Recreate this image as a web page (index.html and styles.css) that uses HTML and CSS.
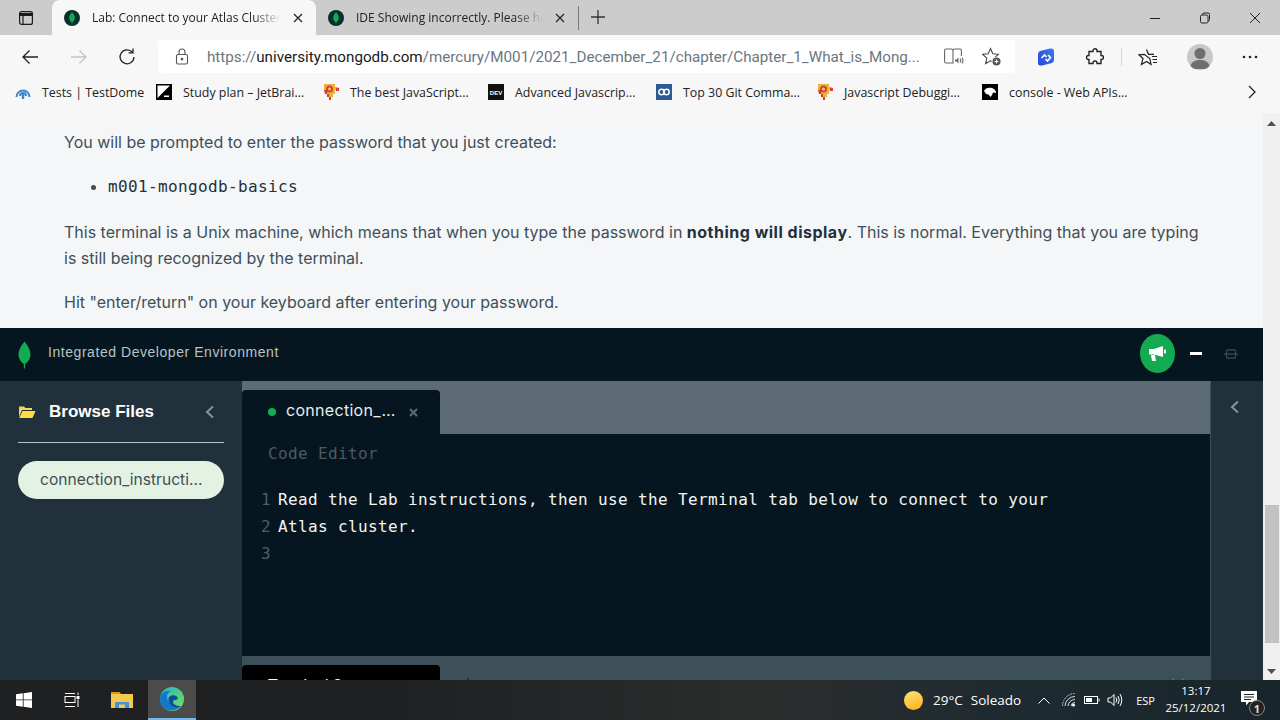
FILE: index.html
```html
<!DOCTYPE html>
<html lang="en">
<head>
<meta charset="utf-8">
<title>Lab: Connect to your Atlas Cluster</title>
<link rel="stylesheet" href="styles.css">
</head>
<body>
<svg class="defs" width="0" height="0" aria-hidden="true">
  <defs>
    <symbol id="fav-mongo" viewBox="0 0 16 16"><circle cx="8" cy="8" r="8" fill="#06302e"/><path d="M8 2.2C9.8 4.3 11 6.200 10.800 8.300 10.600 10.400 9.300 11.600 8.400 12.200L8.200 14H7.800L7.600 12.200C6.700 11.600 5.400 10.400 5.200 8.300 5 6.200 6.200 4.300 8 2.200Z" fill="#13aa52"/></symbol>
    <symbol id="fav-fire" viewBox="0 0 16 16"><path d="M1 0H12V3H15V6H12V10H10V13H8V16H6V13H4V10H2V6H1Z" fill="#e8b53a"/><path d="M1 6H4V10H6V13H8V16H6V13H4V10H2Z" fill="#d83a2b"/><circle cx="6.500" cy="5" r="3.500" fill="#d8402f"/><circle cx="6.500" cy="5" r="1.500" fill="#f6d66a"/><rect x="13" y="4" width="3" height="3" fill="#e2402e"/></symbol>
    <linearGradient id="ext-grad" x1="0" y1="1" x2="1" y2="0"><stop offset="0" stop-color="#2a45e0"/><stop offset="1" stop-color="#3a7bf0"/></linearGradient>
  </defs>
</svg>

<div class="tabstrip">
  <div class="tab-toggle">
    <svg width="16" height="16" viewBox="0 0 16 16" fill="none" stroke="#1a1a1a" stroke-width="1.200"><rect x="1.600" y="1.600" width="12.800" height="12.800" rx="2"/><path d="M1.600 4.500H14.400" stroke-width="3"/><path d="M5 5V14"/></svg>
  </div>
  <div class="tab tab-active">
    <svg class="tab-fav" width="16" height="16"><use href="#fav-mongo"/></svg>
    <span class="tab-title">Lab: Connect to your Atlas Cluster</span>
    <svg class="tab-close" width="10" height="10" viewBox="0 0 10 10" stroke="#222" stroke-width="1.200"><path d="M1 1L9 9M9 1L1 9"/></svg>
  </div>
  <div class="tab">
    <svg class="tab-fav" width="16" height="16"><use href="#fav-mongo"/></svg>
    <span class="tab-title">IDE Showing incorrectly. Please help</span>
    <svg class="tab-close" width="10" height="10" viewBox="0 0 10 10" stroke="#222" stroke-width="1.200"><path d="M1 1L9 9M9 1L1 9"/></svg>
  </div>
  <div class="tab-sep"></div>
  <svg class="tab-new" width="16" height="16" viewBox="0 0 16 16" stroke="#333" stroke-width="1.300"><path d="M8 1V15M1 8H15"/></svg>
  <div class="winctl">
    <svg width="12" height="12" viewBox="0 0 12 12" stroke="#222"><path d="M1 6.500H11"/></svg>
    <svg width="12" height="12" viewBox="0 0 12 12" stroke="#222" fill="none"><rect x="1.500" y="3" width="7.500" height="8" rx="1.500"/><path d="M3.500 3V2.500A1.500 1.500 0 0 1 5 1H9A1.500 1.500 0 0 1 10.500 2.500V7.500A1.500 1.500 0 0 1 9 9"/></svg>
    <svg width="12" height="12" viewBox="0 0 12 12" stroke="#222"><path d="M1 1L11 11M11 1L1 11"/></svg>
  </div>
</div>

<div class="toolbar">
  <svg class="tb-back" width="18" height="16" viewBox="0 0 18 16" fill="none" stroke="#222" stroke-width="1.300"><path d="M17 8H2M8.500 1.500L2 8L8.500 14.500"/></svg>
  <svg class="tb-forward" width="18" height="16" viewBox="0 0 18 16" fill="none" stroke="#c4c4c4" stroke-width="1.300"><path d="M1 8H16M9.500 1.500L16 8L9.500 14.500"/></svg>
  <svg class="tb-reload" width="18" height="18" viewBox="0 0 18 18" fill="none" stroke="#222" stroke-width="1.300"><path d="M14.500 4.500A7 7 0 1 0 16 9"/><path d="M10.500 4.800H15V0.500"/></svg>
  <div class="addressbar">
    <svg class="lock" width="14" height="17" viewBox="0 0 14 17" fill="none" stroke="#555" stroke-width="1.100"><rect x="1.500" y="6.500" width="11" height="9.500" rx="1.500"/><path d="M4 6.500V4A3 3 0 0 1 10 4V6.500"/><circle cx="7" cy="11.200" r=".8" fill="#555"/></svg>
    <span class="url"><span class="url-dim">https://</span><span class="url-host">university.mongodb.com</span><span class="url-dim">/mercury/M001/2021_December_21/chapter/Chapter_1_What_is_Mong...</span></span>
    <svg class="read" width="20" height="17" viewBox="0 0 20 17" fill="none" stroke="#666" stroke-width="1.100"><path d="M9 2.500Q9 1 7.500 1H2Q0.600 1 0.600 2.500V13.500Q0.600 15 2 15H9ZM9 2.500Q9 1 10.500 1H16Q17.400 1 17.400 2.500V8"/><path d="M11 11.500H12.500L14.500 9.500V15.500L12.500 13.500H11Z" fill="#666" stroke="none"/><path d="M16 10.500Q17.500 12.500 16 14.500M18 9.500Q20 12.500 18 15.500"/></svg>
    <svg class="fav-add" width="20" height="20" viewBox="0 0 20 20" fill="none" stroke="#444" stroke-width="1.100"><path d="M8.500 1.500L10.800 6.700L16.300 7.300L12.200 11.100L13.400 16.600L8.500 13.800L3.600 16.600L4.800 11.100L0.700 7.300L6.200 6.700Z"/><circle cx="14.500" cy="14.500" r="4.800" fill="#fff" stroke="none"/><circle cx="14.500" cy="14.500" r="4" fill="#555" stroke="none"/><path d="M14.500 12.500V16.500M12.500 14.500H16.500" stroke="#fff"/></svg>
  </div>
  <svg class="ext-blue" width="18" height="18" viewBox="0 0 18 18"><path d="M1 6Q1 4 3 3L13 0.500Q17 0 17 3V12Q17 14 15 15L5 17.500Q1 18 1 15Z" fill="url(#ext-grad)"/><path d="M4.500 10L7.500 7L9.500 9M8.500 11L10.500 13L13.500 9.500L11 7" fill="none" stroke="#fff" stroke-width="1.600"/></svg>
  <svg class="ext-puzzle" width="18" height="18" viewBox="0 0 18 18" fill="none" stroke="#222" stroke-width="1.400"><path d="M7 3.500V2.800A2 2 0 0 1 11 2.800V3.500H15V7.500H15.500A2 2 0 0 1 15.500 11.500H15V15.500H11V15A2 2 0 0 0 7 15V15.500H3V11.500H2.500A2 2 0 0 1 2.500 7.500H3V3.500Z"/></svg>
  <div class="tb-sep"></div>
  <svg class="tb-favs" width="20" height="18" viewBox="0 0 20 18" fill="none" stroke="#222" stroke-width="1.200"><path d="M8.500 1.500L10.500 6.300H16M11.800 10.500L13 16.500L8.500 13.500L3.500 16.500L5 10.500L1 6.800L6.300 6.300Z"/><path d="M14 8.500H19M14.500 11.500H19M15 14.500H19"/></svg>
  <div class="avatar"><svg width="26" height="26" viewBox="0 0 26 26"><circle cx="13" cy="9.500" r="5.500" fill="#6e6e6e"/><path d="M3 25C3 18 8 16 13 16S23 18 23 25Z" fill="#6e6e6e"/></svg></div>
  <svg class="tb-more" width="16" height="4" viewBox="0 0 16 4" fill="#222"><circle cx="2" cy="2" r="1.300"/><circle cx="8" cy="2" r="1.300"/><circle cx="14" cy="2" r="1.300"/></svg>
</div>

<div class="bookmarks">
  <div class="bm bm-a">
    <svg width="16" height="16" viewBox="0 0 16 16" fill="none" stroke="#3e88c8" stroke-width="2"><path d="M1.500 13A6.500 6.500 0 0 1 14.500 13"/><path d="M5 12A3 3 0 0 1 11 12"/><path d="M8 9V15" stroke-width="2.500"/></svg>
    <span class="bm-text">Tests | TestDome</span>
  </div>
  <div class="bm bm-b">
    <svg width="16" height="16" viewBox="0 0 16 16"><rect width="16" height="16" fill="#000"/><path d="M1.500 1.500H14L1.500 14Z" fill="#fff"/><rect x="8" y="11.500" width="5" height="1.500" fill="#fff"/></svg>
    <span class="bm-text">Study plan – JetBrai...</span>
  </div>
  <div class="bm bm-c">
    <svg width="16" height="16"><use href="#fav-fire"/></svg>
    <span class="bm-text">The best JavaScript...</span>
  </div>
  <div class="bm bm-d">
    <svg width="16" height="16" viewBox="0 0 16 16"><rect width="16" height="16" fill="#111"/><text x="8" y="10.500" class="dev-text" text-anchor="middle">DEV</text></svg>
    <span class="bm-text">Advanced Javascrip...</span>
  </div>
  <div class="bm bm-e">
    <svg width="16" height="16" viewBox="0 0 16 16" fill="none"><rect width="16" height="16" fill="#2d5a94"/><circle cx="5.500" cy="8" r="2.700" stroke="#fff" stroke-width="1.500"/><circle cx="10.500" cy="8" r="2.700" stroke="#fff" stroke-width="1.500"/></svg>
    <span class="bm-text">Top 30 Git Comma...</span>
  </div>
  <div class="bm bm-f">
    <svg width="16" height="16"><use href="#fav-fire"/></svg>
    <span class="bm-text">Javascript Debuggi...</span>
  </div>
  <div class="bm bm-g">
    <svg width="16" height="16" viewBox="0 0 16 16"><rect width="16" height="16" fill="#000"/><path d="M2 7C3 4 7 3 10 4C13 5 14 7 14 9L11 8.500L10 11L8.500 13L6.500 10.500L4 10Z" fill="#fff"/></svg>
    <span class="bm-text">console - Web APIs...</span>
  </div>
  <svg class="bm-more" width="8" height="14" viewBox="0 0 8 14" fill="none" stroke="#222" stroke-width="1.300"><path d="M1 1L7 7L1 13"/></svg>
</div>

<div class="viewport">
  <main class="page">
    <article class="article">
      <p>You will be prompted to enter the password that you just created:</p>
      <ul><li><code>m001-mongodb-basics</code></li></ul>
      <p>This terminal is a Unix machine, which means that when you type the password in <strong>nothing will display</strong>. This is normal. Everything that you are typing is still being recognized by the terminal.</p>
      <p>Hit "enter/return" on your keyboard after entering your password.</p>
    </article>
    <section class="ide">
      <header class="ide-head">
        <svg class="ide-leaf" width="13" height="28" viewBox="0 0 13 28"><path d="M6.500 0.500C9.500 4.500 12.500 8.500 12.500 13.500C12.500 18 9.500 21.500 7.200 23L7 27.500H6L5.800 23C3.500 21.500 0.500 18 0.500 13.500C0.500 8.500 3.500 4.500 6.500 0.500Z" fill="#13aa52"/></svg>
        <span class="ide-title">Integrated Developer Environment</span>
        <div class="ide-announce">
          <svg width="20" height="18" viewBox="0 0 20 18" fill="#fff"><path d="M1 4H6L15 1V12L6 9.500H1Z"/><path d="M3 10H7L8 16H4Z"/><rect x="16" y="4.500" width="2" height="4" rx="1"/></svg>
        </div>
        <div class="ide-min"></div>
        <svg class="ide-pop" width="14" height="10" viewBox="0 0 14 10" fill="none" stroke="#3d4f58" stroke-width="1.200"><rect x="2.500" y="0.800" width="9" height="8.400" rx="1"/><path d="M0 5H14"/></svg>
      </header>
      <div class="ide-body">
        <aside class="files">
          <div class="files-head">
            <svg width="18" height="14" viewBox="0 0 18 14"><path d="M1 1.500H6L7.500 3H14V5H4L1 12Z" fill="#f4d35e"/><path d="M4.500 6H17.500L14.500 13H1.200Z" fill="#ffdd49"/></svg>
            <span class="files-title">Browse Files</span>
            <svg class="files-back" width="9" height="14" viewBox="0 0 9 14" fill="none" stroke="#889397" stroke-width="2"><path d="M8 1.500L2 7L8 12.500"/></svg>
          </div>
          <div class="file-pill"><span class="file-name">connection_instructions.txt</span></div>
        </aside>
        <div class="editor-col">
          <div class="editor-tabs">
            <div class="editor-tab">
              <span class="dot"></span>
              <span class="editor-tab-name">connection_instructions</span>
              <svg width="9" height="9" viewBox="0 0 9 9" stroke="#5d6c74" stroke-width="2"><path d="M1 1L8 8M8 1L1 8"/></svg>
            </div>
          </div>
          <div class="editor">
            <div class="editor-label">Code Editor</div>
            <div class="code">
              <div class="line"><span class="ln">1</span><span>Read the Lab instructions, then use the Terminal tab below to connect to your</span></div>
              <div class="line"><span class="ln">2</span><span>Atlas cluster.</span></div>
              <div class="line"><span class="ln">3</span><span></span></div>
            </div>
          </div>
          <div class="term-bar">
            <div class="term-tab">Terminal 2</div>
            <svg class="term-add" width="10" height="10" viewBox="0 0 10 10" stroke="#21313c" stroke-width="2"><path d="M5 0V10M0 5H10"/></svg>
            <svg class="term-ctl" width="14" height="4" viewBox="0 0 14 4" fill="#5d6c74"><circle cx="2" cy="2" r="1.500"/><circle cx="12" cy="2" r="1.500"/></svg>
          </div>
        </div>
        <aside class="side-right">
          <svg width="9" height="14" viewBox="0 0 9 14" fill="none" stroke="#889397" stroke-width="2"><path d="M8 1.500L2 7L8 12.500"/></svg>
        </aside>
      </div>
    </section>
  </main>
  <div class="scrollbar">
    <svg class="sb-up" width="9" height="5" viewBox="0 0 9 5" fill="#505050"><path d="M4.500 0L9 5H0Z"/></svg>
    <div class="sb-thumb"></div>
    <svg class="sb-down" width="9" height="5" viewBox="0 0 9 5" fill="#505050"><path d="M4.500 5L9 0H0Z"/></svg>
  </div>
</div>

<footer class="taskbar">
  <div class="tk-cell tk-start"><svg width="16" height="16" viewBox="0 0 16 16" fill="#fff"><path d="M0 2.300L6.800 1.300V7.500H0ZM7.600 1.200L16 0V7.500H7.600ZM0 8.300H6.800V14.700L0 13.700ZM7.600 8.300H16V16L7.600 14.800Z"/></svg></div>
  <div class="tk-cell"><svg width="16" height="16" viewBox="0 0 16 16" fill="none" stroke="#fff"><rect x="1" y="4.500" width="10" height="6"/><path d="M1 1.500H11M1 14.500H11M14 0.500V3M14 7.500V15"/><rect x="12.500" y="4" width="3" height="3" fill="#fff" stroke="none"/></svg></div>
  <div class="tk-cell tk-files"><svg width="22" height="18" viewBox="0 0 22 18"><path d="M0 1H8L10 3H22V17H0Z" fill="#f4c84f"/><path d="M0 1H8L9 3H0Z" fill="#d99a1f"/><path d="M4 17V11H18V17H14V13.500H8V17Z" fill="#3e95d8"/></svg></div>
  <div class="tk-cell tk-active"><svg width="24" height="24" viewBox="0 0 24 24"><defs><linearGradient id="edge" x1="0" y1="0" x2="1" y2="1"><stop offset="0" stop-color="#1fb6d8"/><stop offset=".6" stop-color="#58d07a"/><stop offset="1" stop-color="#7de06b"/></linearGradient></defs><circle cx="12" cy="12" r="12" fill="url(#edge)"/><path d="M0 12C0 6 6 3 11 4C6 6 6 11 9 15C12 19 18 20 21 19C17 24 9 25 4 21C1.500 18.500 0 15.500 0 12Z" fill="#1677c8"/><path d="M9 15C7 10 11 7.500 15 8.500C18 9.500 19 12 16 13C13 13 12 15 14 17C16 19 19 19 21 19C17 22 11 20 9 15Z" fill="#0f4f99"/></svg></div>
  <div class="tray">
    <span class="sun"></span>
    <span class="tray-temp">29°C</span>
    <span class="tray-weather">Soleado</span>
    <svg class="tray-up" width="12" height="7" viewBox="0 0 12 7" fill="none" stroke="#fff"><path d="M0.500 6.500L6 1L11.500 6.500"/></svg>
    <svg class="tray-wifi" width="14" height="14" viewBox="0 0 14 14" fill="none" stroke="#ddd"><path d="M0.500 13A12.500 12.500 0 0 1 13 0.500" stroke-dasharray="1.500 1"/><path d="M3 13A10 10 0 0 1 13 3.500"/><path d="M6 13A7 7 0 0 1 13 6.500"/><path d="M9 13A4 4 0 0 1 13 9.500"/><circle cx="11.500" cy="12" r="1.500" fill="#fff" stroke="none"/></svg>
    <svg class="tray-batt" width="16" height="10" viewBox="0 0 16 10" fill="none" stroke="#fff"><rect x="0.500" y="1.500" width="13" height="7"/><rect x="2" y="3" width="6" height="4" fill="#fff" stroke="none"/><path d="M15 3.500V6.500"/></svg>
    <svg class="tray-vol" width="16" height="14" viewBox="0 0 16 14" fill="none" stroke="#fff"><path d="M1 5H3.500L7 1.500V12.500L3.500 9H1Z"/><path d="M9 4.500Q10.500 7 9 9.500M11 3Q13.500 7 11 11M13 1Q16.500 7 13 13"/></svg>
    <span class="tray-lang">ESP</span>
    <div class="tray-clock"><span>13:17</span><span>25/12/2021</span></div>
    <div class="tray-note">
      <svg width="16" height="15" viewBox="0 0 16 15" fill="#fff"><path d="M0 0H16V11H8L5 14.500V11H0Z"/><path d="M3 3.500H13M3 6H13M3 8.500H10" stroke="#222" stroke-width="1"/></svg>
      <span class="note-badge">1</span>
    </div>
  </div>
</footer>
</body>
</html>
```
FILE: styles.css
```css
* { box-sizing: border-box; }
html, body { margin: 0; height: 720px; overflow: hidden; }
body {
  display: flex;
  flex-direction: column;
  width: 1280px;
  font-family: "Open Sans", "Liberation Sans", sans-serif;
  background: #f7f7f7;
  color: #222;
}
.defs { position: absolute; }
svg { display: block; flex: none; }

/* Browser tab strip */
.tabstrip { height: 35px; flex: none; display: flex; align-items: flex-end; background: #ccc; }
.tab-toggle { width: 52px; height: 35px; display: flex; align-items: center; justify-content: center; }
.tab { width: 264px; height: 35px; display: flex; align-items: center; padding: 0 13px 0 12px; gap: 12px; }
.tab-active { background: #f7f7f7; border-radius: 8px 8px 0 0; }
.tab + .tab { width: 262px; }
.tab-title {
  flex: 1; font-size: 12px; white-space: nowrap; overflow: hidden; color: #222;
  -webkit-mask-image: linear-gradient(90deg, #000 85%, transparent 100%);
  mask-image: linear-gradient(90deg, #000 85%, transparent 100%);
}
.tab-sep { width: 1px; height: 24px; margin-bottom: 5px; background: #777; }
.tab-new { margin: 0 0 10px 11px; }
.winctl { margin-left: auto; height: 35px; display: flex; align-items: center; gap: 38px; padding-right: 19px; }

/* Browser toolbar */
.toolbar { height: 43px; flex: none; display: flex; align-items: center; background: #f7f7f7; }
.tb-back { margin-left: 21px; }
.tb-forward { margin-left: 31px; }
.tb-reload { margin-left: 30px; }
.addressbar {
  width: 857px; height: 33px; margin-left: 22px; padding: 0 13px 0 17px;
  display: flex; align-items: center; background: #fff; border-radius: 4px;
}
.url { flex: 1; min-width: 0; margin-left: 18px; font-family: Roboto, sans-serif; font-size: 15.200px; white-space: nowrap; }
.url-dim { color: #6b7680; }
.url-host { color: #1a1a1a; }
.read { margin: 0 18px 0 0; }
.ext-blue { margin-left: 22px; }
.ext-puzzle { margin-left: 31px; }
.tb-sep { width: 1px; height: 18px; margin-left: 17px; background: #d5d5d5; }
.tb-favs { margin-left: 16px; }
.avatar {
  width: 26px; height: 26px; margin-left: 29px; border-radius: 50%;
  background: #c8c8c6; overflow: hidden;
}
.tb-more { margin-left: 29px; }

/* Bookmarks */
.bookmarks { height: 35px; flex: none; display: flex; align-items: center; padding: 0 0 7px 15px; background: #f7f7f7; }
.bm { display: flex; align-items: center; gap: 11px; font-size: 12.400px; white-space: nowrap; flex: none; color: #222; }
.bm-a { width: 141px; }
.bm-b { width: 167px; }
.bm-c { width: 165px; }
.bm-d { width: 168px; }
.bm-e { width: 161px; }
.bm-f { width: 165px; }
.bm-g { width: 266px; }
.dev-text { font: 700 6px "Liberation Sans", sans-serif; fill: #fff; }
.bm-more { flex: none; }

/* Viewport */
.viewport { flex: 1; min-height: 0; display: flex; }
.page { flex: 1; min-width: 0; display: flex; flex-direction: column; background: #f5f6f7; }
.scrollbar { width: 17px; flex: none; display: flex; flex-direction: column; align-items: center; background: #f0f0f0; }
.sb-up { margin-top: 8px; }
.sb-thumb { width: 14px; height: 138px; margin: 379px 0 0 1px; background: #c2c2c2; }
.sb-down { margin-top: 26px; }

/* Article */
.article {
  height: 215px; flex: none; overflow: hidden; padding: 16px 64px 0;
  font-family: Inter, "Liberation Sans", sans-serif; font-size: 16px; line-height: 26px; color: #3d4f58;
}
.article p { margin: 0 0 18.300px; }
.article ul { margin: 0 0 18.300px; padding: .2px 0 0 44px; }
.article code { font-family: "DejaVu Sans Mono", monospace; font-size: 16px; letter-spacing: .37px; color: #21313c; }
.article strong { color: #21313c; letter-spacing: .5px; }

/* IDE */
.ide { flex: 1; min-height: 0; display: flex; flex-direction: column; overflow: hidden; background: #061621; }
.ide-head { height: 53px; flex: none; display: flex; align-items: center; padding: 0 25px 2px 18px; }
.ide-leaf { margin-top: 2px; }
.ide-title { margin: 0 0 4px 17px; font-family: "Liberation Sans", sans-serif; font-size: 14px; letter-spacing: .55px; color: #b8c4c2; }
.ide-announce {
  width: 35px; height: 39px; margin-left: auto; border-radius: 50%;
  display: flex; align-items: center; justify-content: center; background: #13aa52;
}
.ide-min { width: 12px; height: 3px; margin-left: 15px; background: #fff; }
.ide-pop { margin-left: 22px; }
.ide-body { flex: 1; min-height: 0; display: flex; }

.files { width: 242px; flex: none; padding: 0 18px; background: #21313c; }
.files-head {
  height: 62px; display: flex; align-items: center; gap: 13px; padding-right: 10px;
  border-bottom: 1px solid #b8c4c2;
}
.files-title { flex: 1; font-family: "Liberation Sans", sans-serif; font-size: 17px; font-weight: 700; color: #fff; }
.file-pill {
  height: 38px; margin-top: 18px; padding: 0 18px 2px 22px; display: flex; align-items: center;
  border-radius: 19px; background: #e4f2e4;
}
.file-name {
  font-family: Inter, "Liberation Sans", sans-serif; font-size: 15.600px; color: #3d4f58;
  white-space: nowrap; overflow: hidden; text-overflow: ellipsis;
}

.editor-col { flex: 1; min-width: 0; display: flex; flex-direction: column; }
.editor-tabs { height: 53px; flex: none; display: flex; align-items: flex-end; background: #5d6c74; }
.editor-tab {
  width: 198px; height: 44px; padding: 0 22px 0 26px; display: flex; align-items: center; gap: 9px;
  border-radius: 4px 4px 0 0; background: #061621;
}
.dot { width: 8px; height: 8px; flex: none; border-radius: 50%; background: #13aa52; }
.editor-tab-name {
  flex: 1; min-width: 0; margin: 0 4px 4px 1px; font-family: Inter, "Liberation Sans", sans-serif; font-size: 16px; letter-spacing: .3px; color: #e7eeec;
  white-space: nowrap; overflow: hidden; text-overflow: ellipsis;
}
.editor { height: 222px; flex: none; padding-top: 9px; background: #061621; }
.editor-label { padding-left: 26px; font: 16px/22px "DejaVu Sans Mono", monospace; letter-spacing: .37px; color: #4a5a63; }
.code { margin-top: 21px; font: 16px/27px "DejaVu Sans Mono", monospace; letter-spacing: .37px; color: #f3f5f4; }
.line { display: flex; height: 27px; }
.ln { width: 36px; flex: none; padding-left: 19px; color: #4f5d66; }
.term-bar { flex: 1; display: flex; align-items: flex-start; padding-top: 9px; background: #3d4f58; }
.term-tab {
  width: 198px; height: 44px; flex: none; padding: 12px 0 0 26px; border-radius: 4px 4px 0 0;
  font-family: "Liberation Sans", sans-serif; font-size: 16px; color: #fff; background: #000;
}
.term-add { margin: 13px 0 0 23px; }
.term-ctl { margin: 13px 25px 0 auto; }
.side-right {
  width: 53px; flex: none; padding: 19px 0 0 19px; background: #21313c;
  border-left: 1px solid #3d4f58;
}

/* Taskbar */
.taskbar {
  height: 40px; flex: none; display: flex; align-items: stretch; color: #fff; position: relative;
  background: linear-gradient(90deg, #1e2022 0%, #1e2022 30%, #2c2d2d 60%, #1d2a30 80%, #18262c 100%);
}
.tk-cell { width: 48px; display: flex; align-items: center; justify-content: center; }
.tk-files { width: 52px; }
.tk-active { background: #4b4b4b; border-bottom: 2px solid #76b9ed; }
.tray { flex: 1; display: flex; align-items: center; padding-left: 708px; font-size: 13px; }
.sun { width: 19px; height: 19px; flex: none; border-radius: 50%; background: linear-gradient(160deg, #ffe27a, #fbb117); }
.tray-temp { margin-left: 10px; font-size: 13.500px; }
.tray-weather { margin-left: 8px; font-size: 13.500px; }
.tray-up { margin-left: 17px; }
.tray-wifi { margin-left: 12px; }
.tray-batt { margin-left: 8px; }
.tray-vol { margin-left: 7px; }
.tray-lang { margin-left: 13px; font-size: 11px; }
.tray-clock { width: 60px; margin: -2px 0 0 11px; display: flex; flex-direction: column; align-items: center; font-size: 11.500px; line-height: 17px; }
.tray-note { margin: -3px 0 0 15px; position: relative; }
.note-badge {
  position: absolute; right: -8px; bottom: -10px; width: 16px; height: 16px; border-radius: 50%;
  display: flex; align-items: center; justify-content: center;
  font-size: 11px; font-weight: 700; border: 1px solid #888; background: #222; color: #ddd;
}
```
